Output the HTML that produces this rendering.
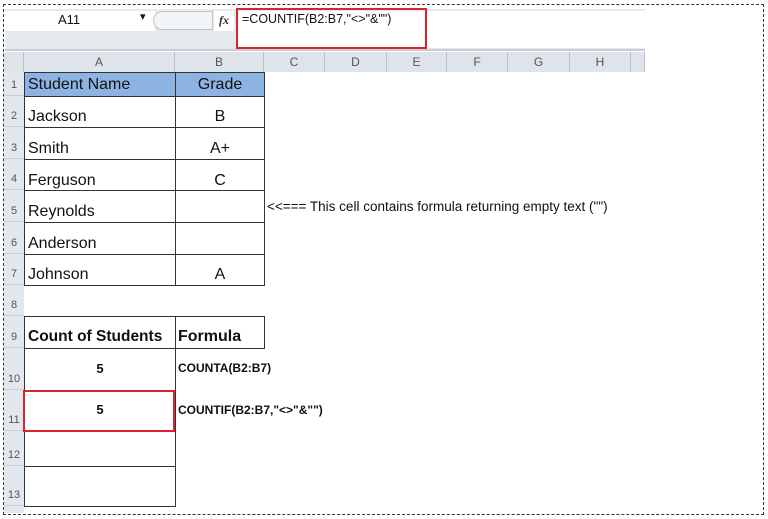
<!DOCTYPE html><html><head><style>
body{margin:0;width:768px;height:519px;background:#fff;position:relative;overflow:hidden;font-family:"Liberation Sans",sans-serif}
div{position:absolute;box-sizing:border-box}
.t{font-size:15px;color:#111;white-space:nowrap}
.rh{left:4px;width:20px;background:#e3e7ee;font-size:11px;color:#555;text-align:center;border-bottom:1px solid #c9ced6}
.ch{top:52px;height:20px;background:#dfe3ea;border-right:1px solid #bcc2cb;font-size:12px;color:#555;text-align:center;line-height:20px}
.c{border:1px solid #333}
</style></head><body>
<div style="left:3px;top:4px;width:761px;height:511px;border:1.5px dashed #333"></div>
<div style="left:5px;top:9px;width:640px;height:42px;background:#e6e9ee;border-bottom:2px solid #c8cdd5"></div>
<div style="left:5px;top:11px;width:150px;height:20px;background:#fff"></div>
<div class="t" style="left:58px;top:12px;font-size:13px">A11</div>
<div class="t" style="left:140px;top:10px;font-size:11px">▾</div>
<div style="left:153px;top:11px;width:60px;height:19px;border:1px solid #c0c5cc;border-radius:10px 0 0 10px;background:#f3f4f6"></div>
<div style="left:214px;top:11px;width:20px;height:20px;background:#fff;font:italic bold 12px 'Liberation Serif';color:#333;text-align:center;line-height:18px">fx</div>
<div style="left:236px;top:11px;width:409px;height:37px;background:#fff"></div>
<div style="left:236px;top:8px;width:191px;height:41px;border:2px solid #e0202a"></div>
<div class="t" style="left:242px;top:12px;font-size:12.5px">=COUNTIF(B2:B7,"&lt;&gt;"&amp;"")</div>
<div style="left:4px;top:52px;width:20px;height:20px;background:#dfe3ea;border-right:1px solid #bcc2cb"></div>
<div class="ch" style="left:24px;width:151px">A</div>
<div class="ch" style="left:175px;width:89px">B</div>
<div class="ch" style="left:264px;width:61px">C</div>
<div class="ch" style="left:325px;width:62px">D</div>
<div class="ch" style="left:387px;width:60px">E</div>
<div class="ch" style="left:447px;width:61px">F</div>
<div class="ch" style="left:508px;width:62px">G</div>
<div class="ch" style="left:570px;width:61px">H</div>
<div class="ch" style="left:631px;width:14px"></div>
<div style="left:4px;top:72px;width:20px;height:441px;background:#e3e7ee"></div>
<div class="rh" style="top:72px;height:24px;padding-top:7px">1</div>
<div class="rh" style="top:96px;height:31px;padding-top:14px">2</div>
<div class="rh" style="top:127px;height:32px;padding-top:15px">3</div>
<div class="rh" style="top:159px;height:31px;padding-top:14px">4</div>
<div class="rh" style="top:190px;height:32px;padding-top:15px">5</div>
<div class="rh" style="top:222px;height:32px;padding-top:15px">6</div>
<div class="rh" style="top:254px;height:31px;padding-top:14px">7</div>
<div class="rh" style="top:285px;height:31px;padding-top:14px">8</div>
<div class="rh" style="top:316px;height:32px;padding-top:15px">9</div>
<div class="rh" style="top:348px;height:42px;padding-top:25px">10</div>
<div class="rh" style="top:390px;height:41px;padding-top:24px">11</div>
<div class="rh" style="top:431px;height:35px;padding-top:18px">12</div>
<div class="rh" style="top:466px;height:40px;padding-top:23px">13</div>
<div style="left:24px;top:72px;width:241px;height:24px;background:#8db3e2"></div>
<div class="c" style="left:24px;top:72px;width:152px;height:25px"></div>
<div class="c" style="left:175px;top:72px;width:90px;height:25px"></div>
<div class="c" style="left:24px;top:96px;width:152px;height:190px"></div>
<div class="c" style="left:175px;top:96px;width:90px;height:190px"></div>
<div style="left:24px;top:127px;width:241px;border-top:1px solid #333"></div>
<div style="left:24px;top:159px;width:241px;border-top:1px solid #333"></div>
<div style="left:24px;top:190px;width:241px;border-top:1px solid #333"></div>
<div style="left:24px;top:222px;width:241px;border-top:1px solid #333"></div>
<div style="left:24px;top:254px;width:241px;border-top:1px solid #333"></div>
<div class="t" style="left:28px;top:76px;font-size:16px">Student Name</div>
<div class="t" style="left:175px;top:76px;width:90px;text-align:center;font-size:16px">Grade</div>
<div class="t" style="left:28px;top:108px;font-size:16px">Jackson</div>
<div class="t" style="left:28px;top:140px;font-size:16px">Smith</div>
<div class="t" style="left:28px;top:172px;font-size:16px">Ferguson</div>
<div class="t" style="left:28px;top:203px;font-size:16px">Reynolds</div>
<div class="t" style="left:28px;top:235px;font-size:16px">Anderson</div>
<div class="t" style="left:28px;top:266px;font-size:16px">Johnson</div>
<div class="t" style="left:175px;top:108px;width:90px;text-align:center;font-size:16px">B</div>
<div class="t" style="left:175px;top:140px;width:90px;text-align:center;font-size:16px">A+</div>
<div class="t" style="left:175px;top:172px;width:90px;text-align:center;font-size:16px">C</div>
<div class="t" style="left:175px;top:266px;width:90px;text-align:center;font-size:16px">A</div>
<div class="t" style="left:267px;top:199px;font-size:13.5px">&lt;&lt;=== This cell contains formula returning empty text ("")</div>
<div class="c" style="left:24px;top:316px;width:152px;height:33px"></div>
<div class="c" style="left:175px;top:316px;width:90px;height:33px"></div>
<div class="c" style="left:24px;top:348px;width:152px;height:159px"></div>
<div style="left:24px;top:466px;width:152px;border-top:1px solid #333"></div>
<div class="t" style="left:28px;top:328px;font-size:15.5px;font-weight:bold">Count of Students</div>
<div class="t" style="left:178px;top:328px;font-size:16px;font-weight:bold">Formula</div>
<div class="t" style="left:24px;top:361px;width:152px;text-align:center;font-size:13px;font-weight:bold">5</div>
<div class="t" style="left:24px;top:402px;width:152px;text-align:center;font-size:13px;font-weight:bold">5</div>
<div class="t" style="left:178px;top:361px;font-size:12px;font-weight:bold">COUNTA(B2:B7)</div>
<div class="t" style="left:178px;top:403px;font-size:12px;font-weight:bold">COUNTIF(B2:B7,"&lt;&gt;"&amp;"")</div>
<div style="left:23px;top:390px;width:152px;height:42px;border:2px solid #e0202a"></div>
</body></html>
